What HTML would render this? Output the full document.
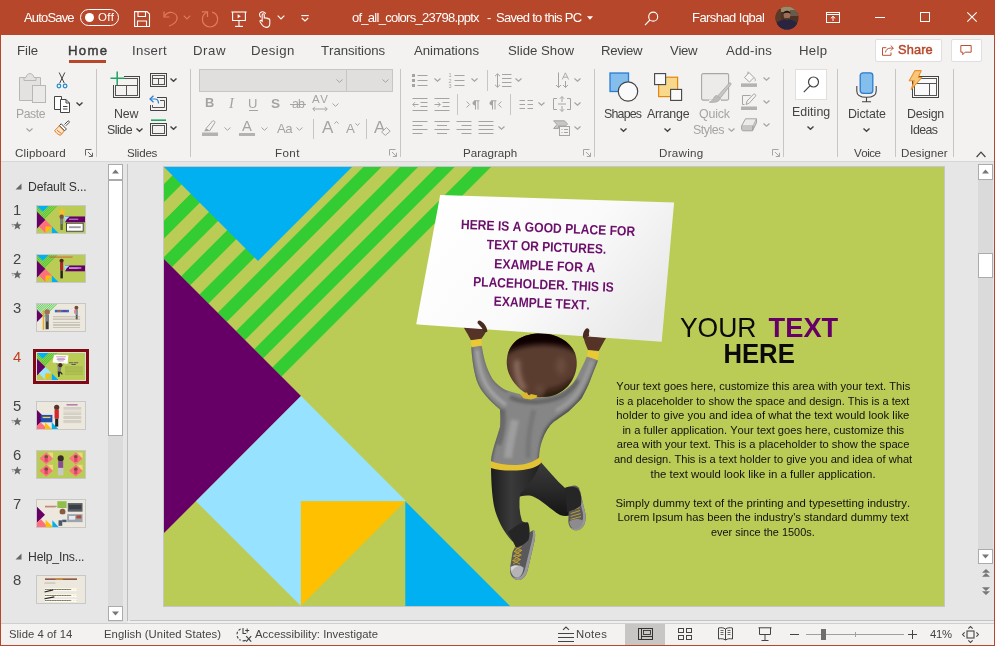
<!DOCTYPE html>
<html>
<head>
<meta charset="utf-8">
<title>PowerPoint</title>
<style>
*{box-sizing:border-box;margin:0;padding:0}
html,body{width:995px;height:646px;overflow:hidden;background:#e6e6e6}
body{font-family:"Liberation Sans",sans-serif;font-size:12px;color:#444;position:relative;font-kerning:none}
.abs{position:absolute}
#win{position:absolute;left:0;top:0;width:995px;height:646px;overflow:hidden;background:#e6e6e6}
#titlebar{position:absolute;left:0;top:0;width:995px;height:35px;background:#b7472a;color:#fff}
#tabs{position:absolute;left:0;top:35px;width:995px;height:30px;background:#f3f2f1}
#ribbon{position:absolute;left:0;top:65px;width:995px;height:97px;background:#f3f2f1;border-bottom:1px solid #d8d6d4}
#status{position:absolute;left:0;top:623px;width:995px;height:23px;background:#f3f2f1;border-top:1px solid #cfcfcf}
.t{position:absolute;white-space:nowrap;line-height:1;will-change:transform}
.gsep{position:absolute;top:4px;width:1px;height:88px;background:#c8c6c4}
.vs{position:absolute;width:1px;background:#c8c6c4}
#borderL{position:absolute;left:0;top:35px;width:1px;height:611px;background:#b7472a}
#borderR{position:absolute;left:994px;top:35px;width:1px;height:611px;background:#b7472a}
#borderB{position:absolute;left:0;top:645px;width:995px;height:1px;background:#b7472a}
svg{position:absolute;overflow:visible}
</style>
</head>
<body>
<div id="win">
<div id="content" class="abs" style="left:1px;top:162px;width:993px;height:460px;background:#e6e6e6"></div>
<div id="thumbs">
<svg style="left:15px;top:183px" width="7" height="7" viewBox="0 0 7 7"><path d="M6.5,0.5 V6.5 H0.5 Z" fill="#666"/></svg>
<span class="t" style="left:28.02px;top:180.7px;font-size:12.2px;line-height:12.2px;color:#333;letter-spacing:-0.160px;">Default S...</span>
<svg style="left:15px;top:553px" width="7" height="7" viewBox="0 0 7 7"><path d="M6.5,0.5 V6.5 H0.5 Z" fill="#666"/></svg>
<span class="t" style="left:28.02px;top:550.7px;font-size:12.2px;line-height:12.2px;color:#333;letter-spacing:-0.175px;">Help_Ins...</span>
<span class="t" style="left:11.5px;top:202.5px;font-size:14.8px;line-height:14.8px;color:#444;width:10px;text-align:center">1</span>
<svg style="left:11px;top:221px" width="11" height="9" viewBox="0 0 13 11"><path d="M7.5,0.3 L9,3.9 L12.8,4.1 L9.8,6.5 L10.8,10.3 L7.5,8.2 L4.2,10.3 L5.2,6.5 L2.2,4.1 L6,3.9 Z" fill="#666"/><path d="M0.5,4.2 H2.4 M1.2,6.2 H3" stroke="#777" stroke-width="0.9" fill="none"/></svg>
<div class="abs" style="left:36px;top:205px;width:50px;height:29px;background:#c8c8c8"></div>
<svg style="left:37px;top:206px;overflow:hidden" width="48" height="27" viewBox="0 0 780 439" preserveAspectRatio="none"><rect width="780" height="439" fill="#bacc56"/><g fill="#33cc33"><polygon points="-38,54 27,-10 45,-10 -28,64"/><polygon points="-19,73 63,-10 82,-10 -10,82"/><polygon points="-1,91 100,-10 118,-10 8,100"/><polygon points="17,109 136,-10 154,-10 26,118"/><polygon points="35,127 173,-10 191,-10 44,136"/><polygon points="54,146 209,-10 228,-10 63,155"/><polygon points="72,164 246,-10 264,-10 81,173"/><polygon points="90,182 282,-10 300,-10 99,191"/><polygon points="108,200 319,-10 337,-10 118,210"/></g><polygon points="0,0 188,0 94,94" fill="#00b0f0"/><polygon points="0,92 137,229 0,366" fill="#660066"/><polygon points="137,229 242,334 137,439 32,334" fill="#ff6f7d"/><polygon points="137,334 242,334 137,439" fill="#ffc000"/><polygon points="242,334 242,439 346,439" fill="#00b0f0"/><rect x="455" y="170" width="325" height="95" fill="#660066"/><polygon points="430,170 530,170 480,220 455,265 455,210" fill="#99e5ff"/><rect x="520" y="205" width="150" height="22" fill="#b070c0"/><polygon points="405,20 425,72 480,75 437,108 452,162 405,130 358,162 373,108 330,75 385,72" fill="#f2c12e"/><rect x="375" y="190" width="50" height="100" fill="#7a8088"/><rect x="380" y="290" width="40" height="100" fill="#5a6a3a"/><circle cx="400" cy="175" r="36" fill="#7a5040"/><rect x="480" y="280" width="270" height="130" fill="#fff" stroke="#333" stroke-width="14"/><rect x="520" y="330" width="190" height="30" fill="#999"/></svg>
<span class="t" style="left:11.5px;top:251.5px;font-size:14.8px;line-height:14.8px;color:#444;width:10px;text-align:center">2</span>
<svg style="left:11px;top:270px" width="11" height="9" viewBox="0 0 13 11"><path d="M7.5,0.3 L9,3.9 L12.8,4.1 L9.8,6.5 L10.8,10.3 L7.5,8.2 L4.2,10.3 L5.2,6.5 L2.2,4.1 L6,3.9 Z" fill="#666"/><path d="M0.5,4.2 H2.4 M1.2,6.2 H3" stroke="#777" stroke-width="0.9" fill="none"/></svg>
<div class="abs" style="left:36px;top:254px;width:50px;height:29px;background:#c8c8c8"></div>
<svg style="left:37px;top:255px;overflow:hidden" width="48" height="27" viewBox="0 0 780 439" preserveAspectRatio="none"><rect width="780" height="439" fill="#bacc56"/><g fill="#33cc33"><polygon points="-38,54 27,-10 45,-10 -28,64"/><polygon points="-19,73 63,-10 82,-10 -10,82"/><polygon points="-1,91 100,-10 118,-10 8,100"/><polygon points="17,109 136,-10 154,-10 26,118"/><polygon points="35,127 173,-10 191,-10 44,136"/><polygon points="54,146 209,-10 228,-10 63,155"/><polygon points="72,164 246,-10 264,-10 81,173"/><polygon points="90,182 282,-10 300,-10 99,191"/><polygon points="108,200 319,-10 337,-10 118,210"/></g><polygon points="0,0 188,0 94,94" fill="#00b0f0"/><polygon points="0,92 137,229 0,366" fill="#660066"/><polygon points="137,229 242,334 137,439 32,334" fill="#ff6f7d"/><polygon points="137,334 242,334 137,439" fill="#ffc000"/><polygon points="242,334 242,439 346,439" fill="#00b0f0"/><rect x="455" y="170" width="325" height="95" fill="#660066"/><polygon points="430,170 530,170 480,220 455,265 455,210" fill="#99e5ff"/><rect x="520" y="205" width="150" height="22" fill="#b070c0"/><rect x="375" y="120" width="50" height="130" fill="#b5232f"/><rect x="380" y="250" width="40" height="130" fill="#222"/><circle cx="400" cy="95" r="34" fill="#4a2b20"/><rect x="200" y="25" width="380" height="18" fill="#d9462f" opacity="0.7"/><rect x="520" y="200" width="200" height="22" fill="#c9a0d9"/></svg>
<span class="t" style="left:11.5px;top:300.5px;font-size:14.8px;line-height:14.8px;color:#444;width:10px;text-align:center">3</span>
<div class="abs" style="left:36px;top:303px;width:50px;height:29px;background:#c8c8c8"></div>
<svg style="left:37px;top:304px;overflow:hidden" width="48" height="27" viewBox="0 0 780 439" preserveAspectRatio="none"><rect width="780" height="439" fill="#ede8dd"/><g fill="#33cc33" opacity="0.85"><polygon points="-38,54 27,-10 45,-10 -28,64"/><polygon points="-19,73 63,-10 82,-10 -10,82"/><polygon points="-1,91 100,-10 118,-10 8,100"/><polygon points="17,109 136,-10 154,-10 26,118"/><polygon points="35,127 173,-10 191,-10 44,136"/><polygon points="54,146 209,-10 228,-10 63,155"/><polygon points="72,164 246,-10 264,-10 81,173"/><polygon points="90,182 282,-10 300,-10 99,191"/><polygon points="108,200 319,-10 337,-10 118,210"/></g><polygon points="0,92 100,192 0,292" fill="#660066"/><rect x="135" y="170" width="60" height="110" fill="#7a8088"/><rect x="140" y="280" width="50" height="130" fill="#3a3a3a"/><circle cx="165" cy="130" r="45" fill="#a07058"/><rect x="92" y="110" width="26" height="310" fill="#e0b030"/><rect x="290" y="95" width="230" height="40" fill="#2a6fc9"/><rect x="330" y="105" width="60" height="22" fill="#e0592a"/><rect x="420" y="105" width="60" height="22" fill="#8a2a8a"/><rect x="625" y="90" width="40" height="90" fill="#8a8f96"/><rect x="605" y="95" width="22" height="60" fill="#e06aa0"/><rect x="630" y="180" width="30" height="70" fill="#444"/><circle cx="640" cy="60" r="32" fill="#7a4a35"/><rect x="260" y="200" width="440" height="7" fill="#9a958a"/><rect x="260" y="225" width="440" height="7" fill="#9a958a"/><rect x="260" y="250" width="440" height="7" fill="#9a958a"/><rect x="260" y="300" width="440" height="7" fill="#9a958a"/><rect x="260" y="325" width="440" height="7" fill="#9a958a"/><rect x="260" y="350" width="440" height="7" fill="#9a958a"/><rect x="260" y="375" width="440" height="7" fill="#9a958a"/></svg>
<span class="t" style="left:11.5px;top:349.5px;font-size:14.8px;line-height:14.8px;color:#c43e1c;width:10px;text-align:center">4</span>
<div class="abs" style="left:33px;top:349px;width:56px;height:35px;background:#7d0a14"></div>
<div class="abs" style="left:36px;top:352px;width:50px;height:29px;background:#dcdcdc"></div>
<svg style="left:37px;top:353px;overflow:hidden" width="48" height="27" viewBox="0 0 780 439" preserveAspectRatio="none"><rect width="780" height="439" fill="#bacc56"/><g fill="#33cc33"><polygon points="-38,54 27,-10 45,-10 -28,64"/><polygon points="-19,73 63,-10 82,-10 -10,82"/><polygon points="-1,91 100,-10 118,-10 8,100"/><polygon points="17,109 136,-10 154,-10 26,118"/><polygon points="35,127 173,-10 191,-10 44,136"/><polygon points="54,146 209,-10 228,-10 63,155"/><polygon points="72,164 246,-10 264,-10 81,173"/><polygon points="90,182 282,-10 300,-10 99,191"/><polygon points="108,200 319,-10 337,-10 118,210"/></g><polygon points="0,0 188,0 94,94" fill="#00b0f0"/><polygon points="0,92 137,229 0,366" fill="#660066"/><polygon points="137,229 242,334 137,334 137,439 32,334" fill="#99e5ff"/><polygon points="137,334 242,334 137,439" fill="#ffc000"/><polygon points="242,334 242,439 346,439" fill="#00b0f0"/><polygon points="276,28 510,35 498,174 252,156" fill="#fff"/><g fill="#a46aa4"><rect x="310" y="58" width="160" height="10"/><rect x="330" y="80" width="120" height="10"/><rect x="320" y="102" width="140" height="10"/><rect x="335" y="124" width="100" height="10"/></g><path d="M315,165 L335,230 L335,300 L385,300 L395,235 L435,175 L425,170 L385,225 L345,225 L325,162 Z" fill="#808080"/><circle cx="377" cy="198" r="34" fill="#4a2b20"/><path d="M335,300 L385,300 L420,340 L405,355 L375,325 L365,390 L345,390 Z" fill="#2a2a2a"/><rect x="520" y="152" width="70" height="14" fill="#555"/><rect x="600" y="152" width="70" height="14" fill="#7a3a7a"/><rect x="560" y="178" width="70" height="14" fill="#444"/><rect x="455" y="218" width="290" height="5" fill="#8a9a48"/><rect x="455" y="233" width="290" height="5" fill="#8a9a48"/><rect x="455" y="248" width="290" height="5" fill="#8a9a48"/><rect x="455" y="263" width="290" height="5" fill="#8a9a48"/><rect x="455" y="278" width="290" height="5" fill="#8a9a48"/><rect x="455" y="293" width="290" height="5" fill="#8a9a48"/><rect x="455" y="308" width="290" height="5" fill="#8a9a48"/><rect x="455" y="338" width="290" height="5" fill="#8a9a48"/><rect x="455" y="353" width="290" height="5" fill="#8a9a48"/></svg>
<span class="t" style="left:11.5px;top:398.5px;font-size:14.8px;line-height:14.8px;color:#444;width:10px;text-align:center">5</span>
<svg style="left:11px;top:417px" width="11" height="9" viewBox="0 0 13 11"><path d="M7.5,0.3 L9,3.9 L12.8,4.1 L9.8,6.5 L10.8,10.3 L7.5,8.2 L4.2,10.3 L5.2,6.5 L2.2,4.1 L6,3.9 Z" fill="#666"/><path d="M0.5,4.2 H2.4 M1.2,6.2 H3" stroke="#777" stroke-width="0.9" fill="none"/></svg>
<div class="abs" style="left:36px;top:401px;width:50px;height:29px;background:#c8c8c8"></div>
<svg style="left:37px;top:402px;overflow:hidden" width="48" height="27" viewBox="0 0 780 439" preserveAspectRatio="none"><rect width="780" height="439" fill="#ede8dd"/><polygon points="0,130 130,260 0,390" fill="#660066"/><polygon points="60,330 170,439 0,439 0,390" fill="#ff6f7d"/><polygon points="130,330 240,439 130,439" fill="#ffc000"/><polygon points="240,330 240,439 345,439" fill="#00b0f0"/><rect x="60" y="210" width="190" height="120" fill="#1f4fae"/><rect x="90" y="240" width="130" height="22" fill="#e8d24a"/><rect x="285" y="120" width="70" height="150" fill="#d7262f"/><rect x="295" y="270" width="50" height="130" fill="#222"/><circle cx="320" cy="85" r="42" fill="#5a3525"/><rect x="480" y="40" width="180" height="14" fill="#8a2a8a"/><rect x="430" y="90" width="290" height="6" fill="#aaa59a"/><rect x="430" y="108" width="290" height="6" fill="#aaa59a"/><rect x="430" y="126" width="290" height="6" fill="#aaa59a"/><rect x="430" y="160" width="290" height="6" fill="#aaa59a"/><rect x="430" y="178" width="290" height="6" fill="#aaa59a"/><rect x="430" y="196" width="290" height="6" fill="#aaa59a"/><rect x="430" y="230" width="290" height="6" fill="#aaa59a"/><rect x="430" y="248" width="290" height="6" fill="#aaa59a"/><rect x="430" y="266" width="290" height="6" fill="#aaa59a"/><rect x="430" y="300" width="290" height="6" fill="#aaa59a"/><rect x="430" y="318" width="290" height="6" fill="#aaa59a"/><rect x="430" y="336" width="290" height="6" fill="#aaa59a"/></svg>
<span class="t" style="left:11.5px;top:447.5px;font-size:14.8px;line-height:14.8px;color:#444;width:10px;text-align:center">6</span>
<svg style="left:11px;top:466px" width="11" height="9" viewBox="0 0 13 11"><path d="M7.5,0.3 L9,3.9 L12.8,4.1 L9.8,6.5 L10.8,10.3 L7.5,8.2 L4.2,10.3 L5.2,6.5 L2.2,4.1 L6,3.9 Z" fill="#666"/><path d="M0.5,4.2 H2.4 M1.2,6.2 H3" stroke="#777" stroke-width="0.9" fill="none"/></svg>
<div class="abs" style="left:36px;top:450px;width:50px;height:29px;background:#c8c8c8"></div>
<svg style="left:37px;top:451px;overflow:hidden" width="48" height="27" viewBox="0 0 780 439" preserveAspectRatio="none"><rect width="780" height="439" fill="#bacc56"/><polygon points="150,25 260,120 150,215 40,120" fill="#ff6f7d"/><circle cx="150" cy="95" r="30" fill="#7a4a35"/><rect x="125" y="120" width="50" height="55" fill="#d9466a"/><polygon points="170,25 260,120 260,25" fill="#ffe08a" opacity="0.7"/><polygon points="150,225 260,320 150,415 40,320" fill="#ff6f7d"/><circle cx="150" cy="295" r="30" fill="#7a4a35"/><rect x="125" y="320" width="50" height="55" fill="#d9466a"/><polygon points="170,225 260,320 260,225" fill="#ffe08a" opacity="0.7"/><polygon points="630,25 740,120 630,215 520,120" fill="#ff6f7d"/><circle cx="630" cy="95" r="30" fill="#7a4a35"/><rect x="605" y="120" width="50" height="55" fill="#d9466a"/><polygon points="650,25 740,120 740,25" fill="#ffe08a" opacity="0.7"/><polygon points="630,225 740,320 630,415 520,320" fill="#ff6f7d"/><circle cx="630" cy="295" r="30" fill="#7a4a35"/><rect x="605" y="320" width="50" height="55" fill="#d9466a"/><polygon points="650,225 740,320 740,225" fill="#ffe08a" opacity="0.7"/><circle cx="385" cy="120" r="50" fill="#3a2a25"/><rect x="345" y="165" width="80" height="110" fill="#8a4a9a"/><rect x="340" y="275" width="90" height="120" fill="#c8c8c8"/></svg>
<span class="t" style="left:11.5px;top:496.5px;font-size:14.8px;line-height:14.8px;color:#444;width:10px;text-align:center">7</span>
<div class="abs" style="left:36px;top:499px;width:50px;height:29px;background:#c8c8c8"></div>
<svg style="left:37px;top:500px;overflow:hidden" width="48" height="27" viewBox="0 0 780 439" preserveAspectRatio="none"><rect width="780" height="439" fill="#ede8dd"/><polygon points="0,110 130,240 0,370" fill="#660066"/><polygon points="60,310 180,439 0,439 0,370" fill="#ff6f7d"/><polygon points="140,320 260,439 140,439" fill="#ffc000"/><polygon points="250,330 250,439 350,439" fill="#00b0f0"/><rect x="330" y="20" width="150" height="110" fill="#8fbf4a"/><rect x="500" y="50" width="240" height="140" fill="#5a5f66"/><rect x="520" y="80" width="200" height="70" fill="#3a3f46"/><rect x="490" y="230" width="250" height="130" fill="#9aa5b0"/><rect x="520" y="260" width="100" height="60" fill="#e8e8ec"/><rect x="640" y="250" width="80" height="50" fill="#b04a3a"/><rect x="130" y="95" width="190" height="12" fill="#b8392a"/><rect x="130" y="120" width="170" height="7" fill="#9a958a"/><circle cx="415" cy="190" r="48" fill="#8a5a40"/><rect x="370" y="235" width="80" height="100" fill="#e8e8e8"/><rect x="350" y="330" width="60" height="90" fill="#4a5a6a"/><rect x="410" y="320" width="70" height="40" fill="#4a5a6a"/></svg>
<span class="t" style="left:11.5px;top:572.5px;font-size:14.8px;line-height:14.8px;color:#444;width:10px;text-align:center">8</span>
<div class="abs" style="left:36px;top:575px;width:50px;height:29px;background:#c8c8c8"></div>
<svg style="left:37px;top:576px;overflow:hidden" width="48" height="27" viewBox="0 0 780 439" preserveAspectRatio="none"><rect width="780" height="439" fill="#ede8dd"/><rect x="130" y="40" width="520" height="22" fill="#7a3a2a"/><rect x="300" y="42" width="120" height="18" fill="#e0a02a"/><rect x="120" y="110" width="180" height="8" fill="#8a857a"/><rect x="130" y="200" width="520" height="40" fill="#fff"/><rect x="130" y="212" width="420" height="10" fill="#222"/><rect x="130" y="300" width="520" height="40" fill="#fff"/><rect x="130" y="312" width="420" height="10" fill="#222"/><rect x="130" y="380" width="520" height="40" fill="#fff"/><rect x="130" y="392" width="420" height="10" fill="#222"/><polygon points="120,250 260,215 265,235 125,270" fill="#222"/><polygon points="120,360 280,330 284,348 124,378" fill="#222"/><rect x="150" y="210" width="16" height="10" fill="#e0c040"/><rect x="190" y="210" width="16" height="10" fill="#e0c040"/><rect x="230" y="210" width="16" height="10" fill="#e0c040"/><rect x="270" y="210" width="16" height="10" fill="#e0c040"/><rect x="310" y="210" width="16" height="10" fill="#e0c040"/><rect x="350" y="210" width="16" height="10" fill="#e0c040"/><rect x="390" y="210" width="16" height="10" fill="#e0c040"/><rect x="430" y="210" width="16" height="10" fill="#e0c040"/><rect x="470" y="210" width="16" height="10" fill="#e0c040"/><rect x="510" y="210" width="16" height="10" fill="#e0c040"/><rect x="550" y="210" width="16" height="10" fill="#e0c040"/><rect x="590" y="210" width="16" height="10" fill="#e0c040"/><rect x="630" y="210" width="16" height="10" fill="#e0c040"/><rect x="150" y="310" width="16" height="10" fill="#e0c040"/><rect x="190" y="310" width="16" height="10" fill="#e0c040"/><rect x="230" y="310" width="16" height="10" fill="#e0c040"/><rect x="270" y="310" width="16" height="10" fill="#e0c040"/><rect x="310" y="310" width="16" height="10" fill="#e0c040"/><rect x="350" y="310" width="16" height="10" fill="#e0c040"/><rect x="390" y="310" width="16" height="10" fill="#e0c040"/><rect x="430" y="310" width="16" height="10" fill="#e0c040"/><rect x="470" y="310" width="16" height="10" fill="#e0c040"/><rect x="510" y="310" width="16" height="10" fill="#e0c040"/><rect x="550" y="310" width="16" height="10" fill="#e0c040"/><rect x="590" y="310" width="16" height="10" fill="#e0c040"/><rect x="630" y="310" width="16" height="10" fill="#e0c040"/><rect x="150" y="390" width="16" height="10" fill="#e0c040"/><rect x="190" y="390" width="16" height="10" fill="#e0c040"/><rect x="230" y="390" width="16" height="10" fill="#e0c040"/><rect x="270" y="390" width="16" height="10" fill="#e0c040"/><rect x="310" y="390" width="16" height="10" fill="#e0c040"/><rect x="350" y="390" width="16" height="10" fill="#e0c040"/><rect x="390" y="390" width="16" height="10" fill="#e0c040"/><rect x="430" y="390" width="16" height="10" fill="#e0c040"/><rect x="470" y="390" width="16" height="10" fill="#e0c040"/><rect x="510" y="390" width="16" height="10" fill="#e0c040"/><rect x="550" y="390" width="16" height="10" fill="#e0c040"/><rect x="590" y="390" width="16" height="10" fill="#e0c040"/><rect x="630" y="390" width="16" height="10" fill="#e0c040"/></svg>
</div>
<div id="slideshadow" class="abs" style="left:163px;top:166px;width:782px;height:441px;background:#c6c6c6"></div>
<svg id="slidesvg" style="left:164px;top:167px;overflow:hidden;will-change:transform" width="780" height="439" viewBox="0 0 780 439">
<defs>
<linearGradient id="cardg" x1="0" y1="0.2" x2="1" y2="0.7"><stop offset="0" stop-color="#ffffff"/><stop offset="0.55" stop-color="#fafafa"/><stop offset="1" stop-color="#e8e8e8"/></linearGradient>
<radialGradient id="headg" cx="0.35" cy="0.62" r="0.65"><stop offset="0" stop-color="#7d5a4a"/><stop offset="0.45" stop-color="#5a3b2d"/><stop offset="0.8" stop-color="#3a2119"/><stop offset="1" stop-color="#1c0d0a"/></radialGradient>
<linearGradient id="bodyg" x1="0" y1="0" x2="1" y2="0"><stop offset="0" stop-color="#6e6e6e"/><stop offset="0.35" stop-color="#9a9a9a"/><stop offset="0.7" stop-color="#7c7c7c"/><stop offset="1" stop-color="#5a5a5a"/></linearGradient>
<linearGradient id="pantg" x1="0" y1="0" x2="1" y2="0"><stop offset="0" stop-color="#1c1c1c"/><stop offset="0.4" stop-color="#3a3a3a"/><stop offset="1" stop-color="#202020"/></linearGradient>
<linearGradient id="pantg2" x1="0" y1="0" x2="0" y2="1"><stop offset="0" stop-color="#3c3c3c"/><stop offset="0.5" stop-color="#2a2a2a"/><stop offset="1" stop-color="#151515"/></linearGradient>
<filter id="bl1" x="-20%" y="-20%" width="140%" height="140%"><feGaussianBlur stdDeviation="1.6"/></filter><filter id="bl2" x="-20%" y="-20%" width="140%" height="140%"><feGaussianBlur stdDeviation="2.5"/></filter><clipPath id="bodyclip"><path d="M471.3,346.5 C471.8,356 473,368 476.5,380 C480,391 489,400 500,409.5 C500.5,416 500.5,421 500,427 C498,434 494.5,444 492.5,452 C491.5,456 491,459 491,463 C500,468 520,469 530,467 L539,460 C539,452 540,446 542.5,439.5 C545,432 549,426 553.5,422 C559,418 564,415 568.5,411.5 C574,406 578.5,402 581.5,398.5 C585,392 588,386 590,381 C592.5,374 595.5,367 598,360.5 L587,356 C585.5,360 583.5,364 581.5,368 C580,371 578.5,374 577,377 C574,383 568,389 560,393 C552,397 540,398 531,397.5 C526,397 522,395.5 519.5,394 C514,392.5 509.5,391.5 505.5,390 C500,387 496,383.5 492.5,379 C489,373 486.5,367 485,361.5 C483.5,356 482.5,351 481.7,345.4 Z"/></clipPath><clipPath id="headclip"><path d="M541,333.5 C556,333.5 570,341 575,353 C579,364 576,377 568,386 C562,392.5 553,397 544,397 C537,397.5 531,397 527,394 C517,388 510,379 507.5,369 C505,357 509,346 517,340 C524,335 532,333.5 541,333.5 Z"/></clipPath>
</defs>
<rect x="0" y="0" width="780" height="439" fill="#bacc56"/>
<g fill="#33cc33"><polygon points="-37.5,54.5 26.9,-10.0 45.0,-10.0 -28.5,63.5"/><polygon points="-19.3,72.7 63.4,-10.0 81.5,-10.0 -10.2,81.8"/><polygon points="-1.0,91.0 99.9,-10.0 118.0,-10.0 8.0,100.0"/><polygon points="17.2,109.2 136.4,-10.0 154.5,-10.0 26.2,118.2"/><polygon points="35.5,127.5 172.9,-10.0 191.0,-10.0 44.5,136.5"/><polygon points="53.7,145.7 209.4,-10.0 227.5,-10.0 62.8,154.8"/><polygon points="72.0,163.9 245.9,-10.0 264.0,-10.0 81.0,173.0"/><polygon points="90.2,182.2 282.4,-10.0 300.5,-10.0 99.2,191.2"/><polygon points="108.4,200.4 318.9,-10.0 337.0,-10.0 117.5,209.5"/></g>
<polygon points="0,0 188,0 94,94" fill="#00b0f0"/>
<polygon points="0,92 137,229 0,366" fill="#660066"/>
<polygon points="137,229 242.2,334.2 137,334.2 137,439 32,334.2" fill="#97e3ff"/>
<polygon points="136.8,334.2 241.3,334.2 136.8,438.9" fill="#ffc000"/>
<polygon points="241.3,334.2 241.3,439 346,439" fill="#00b0f0"/>
<g id="person" transform="translate(-164,-167)">
<!-- right leg (behind) -->
<path d="M539,460 C548,470 556,480 565,488 C570,486 576,487 579,492 L582,506 C578,514 568,518 560,515 C550,509 542,500 532,496 C526,495 520,496 516,498 L500,470 Z" fill="url(#pantg2)"/>
<!-- right shoe -->
<path d="M571,486.5 C574,484.5 578,485.5 579.5,489 L585.5,514 C586.5,522 583.5,529 577.5,530.2 C572,531 568.5,527 568.3,521 L569,505 Z" fill="#59595b"/>
<path d="M579.5,489 L585.5,514 C586.5,522 583.5,529 577.5,530.2 C574,530.6 571.5,529.2 570,527 C573,529 577,528.5 579.5,526 C583,522.5 583.6,518 582.8,513 L577.5,489.5 Z" fill="#98989a"/>
<path d="M569.3,521.5 C572.5,518.5 579,518 583,520.5 C582.5,525 580.5,528 577,528.8 C572.5,529.5 569.5,526.5 569.3,521.5 Z" fill="#8c8c8e"/>
<path d="M571,510.5 L579.5,507.5 M570.8,513.5 L580,510.5 M570.6,516.5 L580.6,513.5 M570.6,519.3 L581,516.5" stroke="#c9a52c" stroke-width="0.9" fill="none"/>
<path d="M565,488 C569,485.5 575,486 578.5,489 C581,493 582,499 581,505 C577,509 572,511 567,512 Z" fill="#262626"/>
<!-- left leg -->
<path d="M491,466 C491,480 492,496 494,506 C497,520 504,532 512,541 L523,546 C527,542 530,536 529,530 C528,525 526,523 522,521 C519,512 519,503 520,494 C528,486 536,476 541,462 Z" fill="url(#pantg)"/>
<!-- left shoe -->
<path d="M517,543 C522,538 529,532 533.5,530 C535.5,531.5 535.5,536 534.5,541 L527.5,571 C525.5,577.5 521.5,580.5 517.5,580 C512.5,579 509.5,574.5 510,568.5 L512.5,552 Z" fill="#59595b"/>
<path d="M533.5,530 C535.5,531.5 535.5,536 534.5,541 L527.5,571 C525.5,577.5 521.5,580.5 517.5,580 C515,579.6 513,578.2 511.8,576.2 C514.5,578.4 518.5,578.4 521.2,576 C523.5,573.8 524.4,571 525.2,568 L532,540 C533,536 533.4,532.5 532.6,530.6 Z" fill="#98989a"/>
<path d="M510.3,567.5 C513.5,564.5 520,564.5 523.6,567.8 C523,572.5 521.5,576 518.5,577.5 C514,578.5 510.3,574 510.3,567.5 Z" fill="#b4b4b6"/>
<path d="M510.8,567 C513,565.2 516.5,565 519,566 C516,566.6 513,568.5 511.6,571.5 Z" fill="#d6d6d8"/>
<path d="M514.5,547 L522,550.5 L514,551.5 L521.3,555 L513.3,556 L520.6,559.5 L512.6,560.5 L520,564" stroke="#c9a52c" stroke-width="0.9" fill="none"/>
<path d="M521.5,546.5 L515,550.5 M521,551 L514.3,555 M520.4,555.5 L513.6,559.5 M519.8,560 L513,564" stroke="#c9a52c" stroke-width="0.9" fill="none"/>
<path d="M508,532 C513,528 522,521 528,522.5 C530,527 530,534 528.5,540 C525,544 520,546.5 516,547.5 Z" fill="#252525"/>
<!-- torso + arms -->
<path d="M471.3,346.5 C471.8,356 473,368 476.5,380 C480,391 489,400 500,409.5 C500.5,416 500.5,421 500,427 C498,434 494.5,444 492.5,452 C491.5,456 491,459 491,463 C500,468 520,469 530,467 L539,460 C539,452 540,446 542.5,439.5 C545,432 549,426 553.5,422 C559,418 564,415 568.5,411.5 C574,406 578.5,402 581.5,398.5 C585,392 588,386 590,381 C592.5,374 595.5,367 598,360.5 L587,356 C585.5,360 583.5,364 581.5,368 C580,371 578.5,374 577,377 C574,383 568,389 560,393 C552,397 540,398 531,397.5 C526,397 522,395.5 519.5,394 C514,392.5 509.5,391.5 505.5,390 C500,387 496,383.5 492.5,379 C489,373 486.5,367 485,361.5 C483.5,356 482.5,351 481.7,345.4 Z" fill="#868686"/>
<!-- body shading -->
<g clip-path="url(#bodyclip)"><g filter="url(#bl1)">
<path d="M470,346 C470.5,358 472,370 475.5,381 C479,392 488,401 499,410.5 C499.5,420 498,430 495,440 C492,450 490,456 490,464" stroke="#4a4a4a" stroke-width="4" fill="none" opacity="0.8"/>
<path d="M599.5,361 C596,370 593,378 590.5,383 C587,391 583,397 580,401 C575,407 568,412 562,416.5 C556,420 551,424 547,431 C543,439 541,450 540.5,461" stroke="#454545" stroke-width="5" fill="none" opacity="0.85"/>
<path d="M482.5,346 C484,358 487.5,370 493,379.5 C497,385 502,389 508,391.5" stroke="#5c5c5c" stroke-width="2.5" fill="none" opacity="0.7"/>
<path d="M477,350 C478,362 481,376 487,386 C492,394 499,400 506,405" stroke="#b4b4b4" stroke-width="3" fill="none" opacity="0.8"/>
<path d="M503,409 C505,420 503,432 499,445" stroke="#5a5a5a" stroke-width="4" fill="none" opacity="0.7"/>
<path d="M515,420 C512,434 509,446 508,458" stroke="#aaaaaa" stroke-width="8" fill="none" opacity="0.65"/>
<path d="M592,361 C588,372 584,382 578,392 C573,399 565,406 556,411" stroke="#a6a6a6" stroke-width="3.5" fill="none" opacity="0.7"/>
<path d="M510,397 C522,403 542,404 560,397 C568,393 574,387 578,380" stroke="#555" stroke-width="4.5" fill="none" opacity="0.7"/>
<path d="M534,410 C530,424 528,440 528,458" stroke="#6a6a6a" stroke-width="5" fill="none" opacity="0.5"/>
</g></g>
<!-- belt -->
<path d="M490.5,461 C500,465 515,466 525,464 C532,462 537,460 540.5,456 L541,463 C537,467 530,469 523,470 C512,471 500,471 491,468 Z" fill="#e3c233"/>
<!-- head -->
<path d="M541,333.5 C556,333.5 570,341 575,353 C579,364 576,377 568,386 C562,392.5 553,397 544,397 C537,397.5 531,397 527,394 C517,388 510,379 507.5,369 C505,357 509,346 517,340 C524,335 532,333.5 541,333.5 Z" fill="#5b3d30"/>
<g clip-path="url(#headclip)"><g filter="url(#bl2)">
<path d="M500,358 C508,340 525,330 545,330 C562,330 576,338 584,358 C574,348 560,344.5 543,344.5 C526,344.5 512,348 500,358 Z M495,325 H590 V340 H495 Z" fill="#0d0303"/>
<path d="M503,350 C504,375 514,392 530,400 L498,402 Z" fill="#1c0c09" opacity="0.85"/>
<path d="M581,350 C582,372 572,392 548,401 L592,400 Z" fill="#160907" opacity="0.9"/>
<path d="M545,390 C555,390 566,385 572,378 L572,402 L540,402 Z" fill="#1c0c09" opacity="0.7"/>
<path d="M517,360 C516,368 518,380 524,390" stroke="#9a7a6c" stroke-width="5.5" fill="none" opacity="0.85"/>
<ellipse cx="561" cy="366" rx="5" ry="9" fill="#7a5a4c" opacity="0.5"/>
<ellipse cx="540" cy="389" rx="4" ry="3" fill="#7a5a4c" opacity="0.5"/>
</g></g>
<!-- collar -->
<path d="M519.5,393.5 L527,392.5 L528.5,396 L531,394 L537.5,395.5 L536,398 L531,399.5 L524,398.5 Z" fill="#d9b92f"/>
<!-- palms -->
<path d="M463.5,327 L486.5,329 C486,333 483,336.5 480.8,339.5 L471,340.5 C469,336 466,331.5 463.5,327 Z" fill="#553327"/>
<path d="M470.6,340.3 L481.2,338.8 L482.2,345.4 L471.6,347.3 Z" fill="#e9c935"/>
<path d="M583,335 L606,338 C603.5,342.5 600.8,347 598.8,351 L588,350 C586,345.5 584,340.5 583,335 Z" fill="#553327"/>
<path d="M587.9,350.3 L599.3,351.8 L597.6,359.8 L586.6,356.4 Z" fill="#e9c935"/>
</g>
<g id="card">
<polygon points="276.2,27.9 510.1,35.4 497.7,174.7 252.2,157.3" fill="url(#cardg)"/>
</g>
<g id="hands" transform="translate(-164,-167)">
<path d="M484.8,331.5 C483.5,328.5 481,325.5 478.6,323.2 C477.8,322.2 478.6,321 480,321.4 C483.5,323.5 486,327 486.6,331.2 Z" fill="#4a2c21" stroke="#4a2c21" stroke-width="1.6" stroke-linejoin="round"/>
<path d="M584,337.5 C583.2,335 584.2,332 586,329.8 C587,328.6 588.8,329.2 588.6,330.8 C588.2,332.6 587.6,334 588.4,335.6 Z" fill="#4a2c21" stroke="#4a2c21" stroke-width="1.6" stroke-linejoin="round"/>
</g>
<g id="cardtext" transform="translate(-1.2,-0.2) rotate(2.35 382 98)" font-family="Liberation Sans, sans-serif" font-weight="bold" font-size="13.6" fill="#6b0f6b" text-anchor="middle">
<text x="383.7" y="65.6" textLength="174.5" lengthAdjust="spacingAndGlyphs">HERE IS A GOOD PLACE FOR</text>
<text x="383" y="84.5" textLength="119.6" lengthAdjust="spacingAndGlyphs">TEXT OR PICTURES.</text>
<text x="382" y="103.5" textLength="101" lengthAdjust="spacingAndGlyphs">EXAMPLE FOR A</text>
<text x="381.5" y="122.3" textLength="140.7" lengthAdjust="spacingAndGlyphs">PLACEHOLDER. THIS IS</text>
<text x="380.5" y="141" textLength="96" lengthAdjust="spacingAndGlyphs">EXAMPLE TEXT.</text>
</g>
<g id="title" font-family="Liberation Sans, sans-serif" font-size="27.2">
<text x="515.9" y="169.7" textLength="76.6" lengthAdjust="spacingAndGlyphs" fill="#0a0a0a">YOUR</text>
<text x="604.6" y="169.7" textLength="69.6" lengthAdjust="spacingAndGlyphs" fill="#660066" font-weight="bold">TEXT</text>
<text x="559.4" y="195.9" textLength="71.4" lengthAdjust="spacingAndGlyphs" fill="#0a0a0a" font-weight="bold">HERE</text>
</g>
<g id="bodytext" font-family="Liberation Sans, sans-serif" font-size="11" fill="#111">
<text x="452.3" y="223" textLength="293.9" lengthAdjust="spacingAndGlyphs">Your text goes here, customize this area with your text. This</text>
<text x="452.3" y="237.6" textLength="293.1" lengthAdjust="spacingAndGlyphs">is a placeholder to show the space and design. This is a text</text>
<text x="452.3" y="252.2" textLength="293.1" lengthAdjust="spacingAndGlyphs">holder to give you and idea of what the text would look like</text>
<text x="458.4" y="266.8" textLength="281.8" lengthAdjust="spacingAndGlyphs">in a fuller application. Your text goes here, customize this</text>
<text x="452.7" y="281.4" textLength="292.7" lengthAdjust="spacingAndGlyphs">area with your text. This is a placeholder to show the space</text>
<text x="449.9" y="296" textLength="298.3" lengthAdjust="spacingAndGlyphs">and design. This is a text holder to give you and idea of what</text>
<text x="486.5" y="310.6" textLength="225.1" lengthAdjust="spacingAndGlyphs">the text would look like in a fuller application.</text>
<text x="451.5" y="339.8" textLength="294.7" lengthAdjust="spacingAndGlyphs">Simply dummy text of the printing and typesetting industry.</text>
<text x="453.5" y="354.4" textLength="291.1" lengthAdjust="spacingAndGlyphs">Lorem Ipsum has been the industry's standard dummy text</text>
<text x="546.9" y="369" textLength="103.9" lengthAdjust="spacingAndGlyphs">ever since the 1500s.</text>
</g>
</svg>
<!-- thumbnail scrollbar -->
<div class="abs" style="left:108px;top:164px;width:15px;height:458px;background:#dbdbdb"></div>
<div class="abs" style="left:108px;top:164px;width:15px;height:16px;background:#fff;border:1px solid #ababab"></div>
<svg style="left:112px;top:169px" width="7" height="5" viewBox="0 0 7 5"><path d="M0,4.5 L3.5,0.5 L7,4.5 Z" fill="#777"/></svg>
<div class="abs" style="left:108px;top:180px;width:15px;height:256px;background:#fff;border:1px solid #ababab"></div>
<div class="abs" style="left:108px;top:606px;width:15px;height:15px;background:#fff;border:1px solid #ababab"></div>
<svg style="left:112px;top:611px" width="7" height="5" viewBox="0 0 7 5"><path d="M0,0.5 L3.5,4.5 L7,0.5 Z" fill="#777"/></svg>
<!-- splitter -->
<div class="abs" style="left:127px;top:164px;width:1px;height:457px;background:#bcbcbc"></div>
<!-- main scrollbar -->
<div class="abs" style="left:978px;top:164px;width:15px;height:400px;background:#dadada"></div>
<div class="abs" style="left:978px;top:164px;width:15px;height:16px;background:#fff;border:1px solid #ababab"></div>
<svg style="left:982px;top:169px" width="7" height="5" viewBox="0 0 7 5"><path d="M0,4.5 L3.5,0.5 L7,4.5 Z" fill="#777"/></svg>
<div class="abs" style="left:978px;top:253px;width:15px;height:25px;background:#fff;border:1px solid #ababab"></div>
<div class="abs" style="left:978px;top:549px;width:15px;height:15px;background:#fff;border:1px solid #ababab"></div>
<svg style="left:982px;top:554px" width="7" height="5" viewBox="0 0 7 5"><path d="M0,0.5 L3.5,4.5 L7,0.5 Z" fill="#777"/></svg>
<svg style="left:982px;top:569px" width="8" height="8" viewBox="0 0 8 8"><path d="M0,3.7 L4,0 L8,3.7 Z M0,7.7 L4,4 L8,7.7 Z" fill="#777"/></svg>
<svg style="left:982px;top:587px" width="8" height="8" viewBox="0 0 8 8"><path d="M0,0.3 L4,4 L8,0.3 Z M0,4.3 L4,8 L8,4.3 Z" fill="#777"/></svg>

<div class="abs" style="left:130px;top:620px;width:864px;height:1px;background:#c4c4c4"></div>
<div class="abs" style="left:128px;top:621px;width:866px;height:2px;background:#efefef"></div>
<div id="titlebar">
<span class="t" style="left:24.00px;top:11.2px;font-size:13px;line-height:13px;color:#fff;letter-spacing:-0.834px;">AutoSave</span>
<div class="abs" style="left:80px;top:9px;width:39px;height:17px;border:1px solid #fff;border-radius:9px"></div>
<div class="abs" style="left:85px;top:13px;width:9px;height:9px;border-radius:5px;background:#fff"></div>
<span class="t" style="left:98.48px;top:11.8px;font-size:11.5px;line-height:11.5px;color:#fff;letter-spacing:0.310px;">Off</span>
<!-- save -->
<svg style="left:134px;top:10.5px" width="17" height="17" viewBox="0 0 17 17" fill="none" stroke="#fff" stroke-width="1.1"><path d="M1.5,0.6 H13 L15.5,3 V15.5 H0.6 V0.6 Z"/><path d="M4,0.6 V5.5 H11.5 V0.6"/><path d="M3.5,15.5 V10 H12.5 V15.5"/></svg>
<!-- undo -->
<svg style="left:163px;top:10px" width="16" height="17" viewBox="0 0 16 17" fill="none" stroke="#e07a60" stroke-width="1.2"><path d="M1,1.5 V7 H6.5"/><path d="M1.3,6.7 C3,3.5 6,2 9,2.5 C12.5,3.2 14.5,6 14,9 C13.5,12 10,14.5 6,16"/></svg>
<svg style="left:183px;top:15px" width="8" height="5" viewBox="0 0 8 5" fill="none" stroke="#e07a60" stroke-width="1.1"><path d="M0.7,0.7 L4,4 L7.3,0.7"/></svg>
<!-- redo -->
<svg style="left:201px;top:10px" width="18" height="18" viewBox="0 0 18 18" fill="none" stroke="#e07a60" stroke-width="1.2"><path d="M1,1.8 H6.5 V7"/><path d="M6.3,2.3 C3.3,3.5 1.4,6.3 1.4,9.5 C1.4,13.6 4.8,17 9,17 C13.2,17 16.6,13.6 16.6,9.5 C16.6,6 14.2,3 11,2.2"/></svg>
<!-- present -->
<svg style="left:231px;top:10.5px" width="16" height="17" viewBox="0 0 16 17" fill="none" stroke="#fff" stroke-width="1.1"><path d="M0.4,1 H15.6"/><path d="M1.6,1 V9.5 H14.4 V1"/><path d="M8,9.5 V15"/><path d="M4,15.4 H12"/><path d="M6.6,3.2 L9.8,5.2 L6.6,7.2 Z" fill="#fff" stroke="none"/></svg>
<!-- touch -->
<svg style="left:257.5px;top:10.5px" width="13" height="17" viewBox="0 0 15 19" preserveAspectRatio="none" fill="none" stroke="#fff" stroke-width="1.25"><path d="M3.2,7 C1.5,5.5 1.2,3 3,1.6 C5,0.2 8,1 8.8,3.2"/><path d="M4.8,11.5 V4.2 C4.8,2.6 7.2,2.6 7.2,4.2 V8.5 C7.2,7.2 9.4,7.2 9.4,8.6 C9.6,7.6 11.6,7.8 11.6,9.2 C11.9,8.4 13.6,8.6 13.6,10 V14 C13.6,16.5 12,18.3 9.5,18.3 C7,18.3 5.8,17.2 4.6,15.4 L2.4,12 C1.8,10.8 3.4,10 4.2,11 Z"/></svg>
<svg style="left:277px;top:15px" width="8" height="5" viewBox="0 0 8 5" fill="none" stroke="#fff" stroke-width="1.1"><path d="M0.7,0.7 L4,4 L7.3,0.7"/></svg>
<!-- customize -->
<svg style="left:300.5px;top:14.5px" width="8" height="7" viewBox="0 0 8 7" fill="none" stroke="#fff" stroke-width="1.1"><path d="M0.3,0.6 H7.7"/><path d="M0.8,3 L4,6 L7.2,3"/></svg>
<span class="t" style="left:352.48px;top:11.2px;font-size:13px;line-height:13px;color:#fff;letter-spacing:-0.736px;">of_all_colors_23798.pptx</span><span class="t" style="left:486.98px;top:11.2px;font-size:13px;line-height:13px;color:#fff;letter-spacing:0.000px;">-</span><span class="t" style="left:496.42px;top:11.2px;font-size:13px;line-height:13px;color:#fff;letter-spacing:-0.716px;">Saved to this PC</span>
<svg style="left:587px;top:16px" width="6" height="4" viewBox="0 0 6 4"><path d="M0,0.3 L6,0.3 L3,3.8 Z" fill="#fff"/></svg>
<!-- search -->
<svg style="left:644px;top:10.5px" width="15" height="15" viewBox="0 0 16 16" fill="none" stroke="#fff" stroke-width="1.2"><circle cx="9.8" cy="6" r="4.8"/><path d="M6.3,9.6 L1,15"/></svg>
<span class="t" style="left:691.96px;top:11.2px;font-size:13px;line-height:13px;color:#fff;letter-spacing:-0.557px;">Farshad Iqbal</span>
<!-- avatar -->
<svg style="left:775px;top:6px" width="24" height="24" viewBox="0 0 24 24"><defs><clipPath id="avc"><circle cx="12" cy="12" r="11.5"/></clipPath></defs><g clip-path="url(#avc)"><rect width="24" height="24" fill="#4a3224"/><rect x="5" y="0" width="19" height="6" fill="#9a8a6a"/><rect x="15" y="4" width="9" height="6" fill="#6a5a4a"/><rect x="0" y="3" width="6" height="12" fill="#5a3a26"/><path d="M0,24 C0,16 5,13.5 12,13.5 C19,13.5 24,16 24,24 Z" fill="#2a2440"/><ellipse cx="12" cy="9" rx="3.4" ry="4.2" fill="#9c6e56"/><path d="M8.4,8 C8.2,3.6 15.8,3.6 15.6,8 C14.5,6.2 9.5,6.2 8.4,8 Z" fill="#1a1210"/><path d="M9.5,11.5 C10.5,13.8 13.5,13.8 14.5,11.5 C13.5,12.6 10.5,12.6 9.5,11.5 Z" fill="#3a2418"/></g></svg>
<!-- ribbon display -->
<svg style="left:826px;top:12px" width="14" height="11" viewBox="0 0 14 11" fill="none" stroke="#fff" stroke-width="1"><rect x="0.5" y="0.5" width="13" height="10"/><path d="M0.5,2.5 H13.5"/><path d="M7,9 V4.5"/><path d="M4.8,6.4 L7,4.3 L9.2,6.4"/></svg>
<div class="abs" style="left:875px;top:17px;width:10px;height:1px;background:#fff"></div>
<div class="abs" style="left:920px;top:12px;width:10px;height:10px;border:1px solid #fff"></div>
<svg style="left:966.5px;top:12px" width="10" height="10" viewBox="0 0 10 10" stroke="#fff" stroke-width="1.1"><path d="M0.3,0.3 L9.7,9.7 M9.7,0.3 L0.3,9.7"/></svg>
</div>
<div id="tabs">
<span class="t" style="left:16.94px;top:8.8px;font-size:13.2px;line-height:13.2px;color:#444;letter-spacing:-0.049px;">File</span>
<span class="t" style="left:131.81px;top:8.8px;font-size:13.2px;line-height:13.2px;color:#444;letter-spacing:0.343px;">Insert</span>
<span class="t" style="left:192.94px;top:8.8px;font-size:13.2px;line-height:13.2px;color:#444;letter-spacing:0.585px;">Draw</span>
<span class="t" style="left:250.94px;top:8.8px;font-size:13.2px;line-height:13.2px;color:#444;letter-spacing:0.465px;">Design</span>
<span class="t" style="left:320.74px;top:8.8px;font-size:13.2px;line-height:13.2px;color:#444;letter-spacing:-0.029px;">Transitions</span>
<span class="t" style="left:414.00px;top:8.8px;font-size:13.2px;line-height:13.2px;color:#444;letter-spacing:-0.029px;">Animations</span>
<span class="t" style="left:508.41px;top:8.8px;font-size:13.2px;line-height:13.2px;color:#444;letter-spacing:0.009px;">Slide Show</span>
<span class="t" style="left:600.94px;top:8.8px;font-size:13.2px;line-height:13.2px;color:#444;letter-spacing:-0.342px;">Review</span>
<span class="t" style="left:670.00px;top:8.8px;font-size:13.2px;line-height:13.2px;color:#444;letter-spacing:-0.367px;">View</span>
<span class="t" style="left:726.00px;top:8.8px;font-size:13.2px;line-height:13.2px;color:#444;letter-spacing:0.209px;">Add-ins</span>
<span class="t" style="left:798.94px;top:8.8px;font-size:13.2px;line-height:13.2px;color:#444;letter-spacing:0.327px;">Help</span>
<span class="t" style="left:67.94px;top:8.8px;font-size:13.2px;line-height:13.2px;color:#3a3a3a;letter-spacing:1.310px;-webkit-text-stroke:0.45px #3a3a3a">Home</span>

<div class="abs" style="left:69px;top:25px;width:37px;height:3px;background:#b7472a"></div>
<div class="abs" style="left:874.5px;top:3.5px;width:67px;height:23px;background:#fff;border:1px solid #e1dfdd;border-radius:2px"></div>
<svg style="left:882px;top:9px" width="12" height="12.5" viewBox="0 0 14 13" fill="none" stroke="#b7472a" stroke-width="1.1"><path d="M5,3.5 H0.6 V12.4 H10.5 V9"/><path d="M4,9 C4.5,6 6.5,4.2 9.5,4 H13"/><path d="M10.2,1 L13.2,4 L10.2,7"/></svg>
<span class="t" style="left:897.92px;top:9.0px;font-size:12.8px;line-height:12.8px;color:#b7472a;letter-spacing:0.119px;-webkit-text-stroke:0.45px #b7472a">Share</span>
<div class="abs" style="left:950.5px;top:3.5px;width:31px;height:23px;background:#fff;border:1px solid #e1dfdd;border-radius:2px"></div>
<svg style="left:960px;top:10px" width="12" height="10.5" viewBox="0 0 13 12" fill="none" stroke="#b7472a" stroke-width="1.1"><path d="M0.6,0.6 H12.4 V8.2 H5.5 L2.8,11 V8.2 H0.6 Z"/></svg>
</div>
<div id="ribbon">
<!-- group separators -->
<div class="vs" style="left:96px;top:4px;height:88px"></div>
<div class="vs" style="left:190px;top:4px;height:88px"></div>
<div class="vs" style="left:400px;top:4px;height:88px"></div>
<div class="vs" style="left:594px;top:4px;height:88px"></div>
<div class="vs" style="left:783px;top:4px;height:88px"></div>
<div class="vs" style="left:837px;top:4px;height:88px"></div>
<div class="vs" style="left:895px;top:4px;height:88px"></div>
<div class="vs" style="left:953px;top:4px;height:88px"></div>
<!-- group labels -->
<span class="t" style="left:14.92px;top:82.2px;font-size:11.6px;line-height:11.6px;color:#444;letter-spacing:0.145px;">Clipboard</span>
<span class="t" style="left:127.48px;top:82.2px;font-size:11.6px;line-height:11.6px;color:#444;letter-spacing:-0.233px;">Slides</span>
<span class="t" style="left:274.57px;top:82.2px;font-size:11.6px;line-height:11.6px;color:#444;letter-spacing:0.412px;">Font</span>
<span class="t" style="left:462.57px;top:82.2px;font-size:11.6px;line-height:11.6px;color:#444;letter-spacing:-0.004px;">Paragraph</span>
<span class="t" style="left:659.07px;top:82.2px;font-size:11.6px;line-height:11.6px;color:#444;letter-spacing:0.271px;">Drawing</span>
<span class="t" style="left:853.50px;top:82.2px;font-size:11.6px;line-height:11.6px;color:#444;letter-spacing:-0.509px;">Voice</span>
<span class="t" style="left:900.57px;top:82.2px;font-size:11.6px;line-height:11.6px;color:#444;letter-spacing:0.023px;">Designer</span>
<!-- dialog launchers -->
<svg style="left:85px;top:84px" width="8" height="8" viewBox="0 0 8 8" stroke="#666" fill="none"><path d="M0.5,6.5 V0.5 H6.5 M3,3 L7.3,7.3 M7.5,3.8 V7.5 H3.8"/></svg>
<svg style="left:389px;top:84px" width="8" height="8" viewBox="0 0 8 8" fill="none" stroke="#a6a4a2"><path d="M0.5,6.5 V0.5 H6.5 M3,3 L7.3,7.3 M7.5,3.8 V7.5 H3.8"/></svg>
<svg style="left:583px;top:84px" width="8" height="8" viewBox="0 0 8 8" fill="none" stroke="#a6a4a2"><path d="M0.5,6.5 V0.5 H6.5 M3,3 L7.3,7.3 M7.5,3.8 V7.5 H3.8"/></svg>
<svg style="left:772px;top:84px" width="8" height="8" viewBox="0 0 8 8" fill="none" stroke="#a6a4a2"><path d="M0.5,6.5 V0.5 H6.5 M3,3 L7.3,7.3 M7.5,3.8 V7.5 H3.8"/></svg>
<!-- collapse -->
<svg style="left:976px;top:86px" width="10" height="7" viewBox="0 0 10 7" stroke-width="1.2" fill="none" stroke="#444"><path d="M0.6,6 L5,1.2 L9.4,6"/></svg>

<!-- ===== Clipboard ===== -->
<svg style="left:19px;top:8px" width="28" height="31" viewBox="0 0 28 31"><path d="M0.5,4.5 H7 C7.5,2 9,0.6 11,0.6 C13,0.6 14.5,2 15,4.5 H21.5 V27.5 H0.5 Z" fill="#e4e2e0" stroke="#b9b7b5"/><path d="M5,4.5 V7.5 H17 V4.5" fill="none" stroke="#b9b7b5"/><rect x="13.5" y="12.5" width="13" height="17" fill="#ebe9e7" stroke="#b9b7b5"/></svg>
<span class="t" style="left:15.52px;top:42.7px;font-size:12.2px;line-height:12.2px;color:#a6a4a2;letter-spacing:-0.420px;">Paste</span>
<svg style="left:25.5px;top:62.5px" width="7" height="4" viewBox="0 0 7 4" stroke-width="1.2" fill="none" stroke="#a6a4a2"><path d="M0.5,0.5 L3.5,3.3 L6.5,0.5"/></svg>
<!-- cut -->
<svg style="left:56px;top:7px" width="12" height="17" viewBox="0 0 12 17" fill="none"><path d="M3.2,0.5 L8.3,11.2 M8.8,0.5 L3.7,11.2" stroke="#444" stroke-width="1"/><circle cx="2.9" cy="14" r="1.8" stroke="#1e8ad6" stroke-width="1.2"/><circle cx="9.1" cy="14" r="1.8" stroke="#1e8ad6" stroke-width="1.2"/></svg>
<!-- copy -->
<svg style="left:54px;top:31px" width="17" height="17" viewBox="0 0 17 17" fill="#fff" stroke="#444"><path d="M0.5,0.5 H7.5 V13.5 H0.5 Z"/><path d="M6.5,3.5 H12 L15.5,7 V16.5 H6.5 Z"/><path d="M12,3.5 V7 H15.5" fill="none"/><path d="M9,10.5 H13.5 M9,13 H13.5" fill="none"/></svg>
<svg style="left:76px;top:37px" width="7" height="4" viewBox="0 0 7 4" stroke-width="1.45" fill="none" stroke="#444"><path d="M0.5,0.5 L3.5,3.3 L6.5,0.5"/></svg>
<!-- format painter -->
<svg style="left:54px;top:55px" width="17" height="16" viewBox="0 0 17 16"><path d="M10.5,4.5 L13.8,1.2 C14.6,0.4 15.9,1.7 15.1,2.5 L11.8,5.8" fill="#fff" stroke="#444"/><path d="M7.2,3.8 L12.4,9 L10.6,10.8 L5.4,5.6 Z" fill="#fff" stroke="#444"/><path d="M5.2,6 L10.2,11 L6.5,15.3 C4,14.6 2,13 0.7,10.6 Z" fill="#fbe3cc" stroke="#e07b1d"/><path d="M3,10.2 L7.5,13.6" stroke="#e07b1d" fill="none"/></svg>

<!-- ===== Slides ===== -->
<svg style="left:110px;top:6px" width="31" height="29" viewBox="0 0 31 29" fill="none"><rect x="3.5" y="5.5" width="26" height="21" stroke="#444"/><rect x="5.5" y="7.5" width="22" height="17" stroke="#555"/><path d="M5.5,14.5 H27.5 M16.5,14.5 V24.5" stroke="#555"/><rect x="0" y="0" width="14" height="14" fill="#f3f2f1" stroke="none"/><path d="M7.2,0.5 V14 M0.5,7.2 H14.5" stroke="#21a366" stroke-width="1.5"/></svg>
<span class="t" style="left:113.51px;top:42.5px;font-size:12.4px;line-height:12.4px;color:#444;letter-spacing:-0.180px;">New</span>
<span class="t" style="left:107.44px;top:58.5px;font-size:12.4px;line-height:12.4px;color:#444;letter-spacing:-0.506px;">Slide</span>
<svg style="left:135.5px;top:62.5px" width="7" height="4" viewBox="0 0 7 4" stroke-width="1.45" fill="none" stroke="#444"><path d="M0.5,0.5 L3.5,3.3 L6.5,0.5"/></svg>
<!-- layout -->
<svg style="left:150px;top:8px" width="17" height="14" viewBox="0 0 17 14" fill="none" stroke="#444"><rect x="0.5" y="0.5" width="16" height="13"/><rect x="2.5" y="2.5" width="12" height="9" stroke="#555"/><path d="M2.5,5.5 H14.5 M8.5,5.5 V11.5" stroke="#555"/></svg>
<svg style="left:170px;top:13px" width="7" height="4" viewBox="0 0 7 4" stroke-width="1.45" fill="none" stroke="#444"><path d="M0.5,0.5 L3.5,3.3 L6.5,0.5"/></svg>
<!-- reset -->
<svg style="left:149px;top:30px" width="18" height="16" viewBox="0 0 18 16" fill="none"><path d="M8,2.5 H17.5 V15.5 H1.5 V10" stroke="#444"/><path d="M11,5.5 H15.5 V12.5 H3.5 V10" stroke="#555"/><path d="M4.5,0.8 L1,4 L4.5,7.2" stroke="#2b7cd3" stroke-width="1.2"/><path d="M1.2,4 H6 C8.5,4 9.5,6 9.5,8.5" stroke="#2b7cd3" stroke-width="1.2"/></svg>
<!-- section -->
<svg style="left:150px;top:54px" width="17" height="17" viewBox="0 0 17 17" fill="none"><path d="M1,1.2 H16" stroke="#21a366" stroke-width="1.6"/><rect x="0.5" y="4.5" width="16" height="12" stroke="#444"/><rect x="2.5" y="6.5" width="12" height="8" stroke="#555"/></svg>
<svg style="left:170px;top:61px" width="7" height="4" viewBox="0 0 7 4" stroke-width="1.45" fill="none" stroke="#444"><path d="M0.5,0.5 L3.5,3.3 L6.5,0.5"/></svg>

<!-- ===== Font ===== -->
<div class="abs" style="left:199px;top:4px;width:148px;height:23px;background:#e1dfdd;border:1px solid #c8c6c4"></div>
<div class="abs" style="left:346px;top:4px;width:47px;height:23px;background:#e1dfdd;border:1px solid #c8c6c4"></div>
<svg style="left:336px;top:14px" width="7" height="4" viewBox="0 0 7 4" fill="none" stroke="#a6a4a2"><path d="M0.5,0.5 L3.5,3.3 L6.5,0.5"/></svg>
<svg style="left:382px;top:14px" width="7" height="4" viewBox="0 0 7 4" fill="none" stroke="#a6a4a2"><path d="M0.5,0.5 L3.5,3.3 L6.5,0.5"/></svg>
<span class="t" style="left:205.17px;top:32.2px;font-size:12.8px;line-height:12.8px;color:#a6a4a2;font-weight:bold;letter-spacing:0.000px;">B</span>
<span class="t" style="left:228.5px;top:31px;font-size:14.5px;line-height:14.5px;color:#a6a4a2;font-style:italic;font-family:'Liberation Serif',serif">I</span>
<span class="t" style="left:248.03px;top:31.5px;font-size:13px;line-height:13px;color:#a6a4a2;letter-spacing:0.000px;">U</span>
<div class="abs" style="left:249px;top:44.5px;width:9px;height:1px;background:#a6a4a2"></div>
<span class="t" style="left:270.66px;top:31.5px;font-size:13.6px;line-height:13.6px;color:#a6a4a2;font-weight:bold;letter-spacing:0.000px;">S</span>
<span class="t" style="left:291.50px;top:32.5px;font-size:12.4px;line-height:12.4px;color:#a6a4a2;letter-spacing:-0.776px;">ab</span>
<div class="abs" style="left:290px;top:39px;width:16px;height:1px;background:#a6a4a2"></div>
<span class="t" style="left:312.00px;top:29.3px;font-size:11.5px;line-height:11.5px;color:#a6a4a2;letter-spacing:0.654px;">AV</span>
<svg style="left:312px;top:40.5px" width="16" height="6" viewBox="0 0 16 6" fill="none" stroke="#a6a4a2"><path d="M0.8,3 H15.2 M3,0.8 L0.8,3 L3,5.2 M13,0.8 L15.2,3 L13,5.2"/></svg>
<svg style="left:332px;top:38px" width="7" height="4" viewBox="0 0 7 4" fill="none" stroke="#a6a4a2"><path d="M0.5,0.5 L3.5,3.3 L6.5,0.5"/></svg>
<!-- highlight -->
<svg style="left:202px;top:54px" width="17" height="17" viewBox="0 0 17 17"><path d="M4,9.5 L10.5,2 C11.5,1 13.5,2.5 12.8,3.8 L7.5,12 Z" fill="none" stroke="#a6a4a2"/><path d="M4,9.5 L2,12.2 L5,12.2 L7.5,12 Z" fill="#a6a4a2"/><rect x="0" y="13.5" width="16" height="3.5" fill="#b4b2b0"/></svg>
<svg style="left:224px;top:62px" width="7" height="4" viewBox="0 0 7 4" fill="none" stroke="#a6a4a2"><path d="M0.5,0.5 L3.5,3.3 L6.5,0.5"/></svg>
<span class="t" style="left:241.50px;top:53.8px;font-size:14.8px;line-height:14.8px;color:#a6a4a2;letter-spacing:0.000px;">A</span>
<div class="abs" style="left:239px;top:67.5px;width:16px;height:3.5px;background:#b4b2b0"></div>
<svg style="left:261px;top:62px" width="7" height="4" viewBox="0 0 7 4" fill="none" stroke="#a6a4a2"><path d="M0.5,0.5 L3.5,3.3 L6.5,0.5"/></svg>
<span class="t" style="left:277.00px;top:56.8px;font-size:13.2px;line-height:13.2px;color:#a6a4a2;letter-spacing:-0.664px;">Aa</span>
<svg style="left:296px;top:62px" width="7" height="4" viewBox="0 0 7 4" fill="none" stroke="#a6a4a2"><path d="M0.5,0.5 L3.5,3.3 L6.5,0.5"/></svg>
<div class="vs" style="left:313px;top:54px;height:20px"></div>
<span class="t" style="left:322.00px;top:53.6px;font-size:17px;line-height:17px;color:#a6a4a2;letter-spacing:0.000px;">A</span>
<svg style="left:333.5px;top:56px" width="5" height="3" viewBox="0 0 5 3" fill="none" stroke="#a6a4a2"><path d="M0.4,2.6 L2.5,0.6 L4.6,2.6"/></svg>
<span class="t" style="left:346.00px;top:56.7px;font-size:13.3px;line-height:13.3px;color:#a6a4a2;letter-spacing:0.000px;">A</span>
<svg style="left:355px;top:58px" width="5" height="3" viewBox="0 0 5 3" fill="none" stroke="#a6a4a2"><path d="M0.4,0.4 L2.5,2.4 L4.6,0.4"/></svg>
<div class="vs" style="left:366px;top:54px;height:20px"></div>
<span class="t" style="left:374.00px;top:53.6px;font-size:17px;line-height:17px;color:#a6a4a2;letter-spacing:0.000px;">A</span>
<svg style="left:381px;top:61.5px" width="10" height="9" viewBox="0 0 10 9" ><path d="M0.6,5 L5.5,0.6 L9.2,4.2 L4.3,8.4 Z" fill="#f3f2f1" stroke="#a6a4a2"/></svg>
<!-- ===== Paragraph ===== -->
<!-- bullets -->
<svg style="left:412px;top:8px" width="16" height="15" viewBox="0 0 16 15"><rect x="0" y="1" width="3" height="3" fill="#a6a4a2"/><rect x="0" y="6" width="3" height="3" fill="#a6a4a2"/><rect x="0" y="11" width="3" height="3" fill="#a6a4a2"/><path d="M5.5,2.5 H15.5 M5.5,7.5 H15.5 M5.5,12.5 H15.5" fill="none" stroke="#a6a4a2"/></svg>
<svg style="left:433.5px;top:13px" width="7" height="4" viewBox="0 0 7 4" stroke-width="1.2" fill="none" stroke="#a6a4a2"><path d="M0.5,0.5 L3.5,3.3 L6.5,0.5"/></svg>
<svg style="left:448px;top:7px" width="17" height="17" viewBox="0 0 17 17"><path d="M6.5,3.5 H16.5 M6.5,8.5 H16.5 M6.5,13.5 H16.5" fill="none" stroke="#a6a4a2"/><text x="0.5" y="5" font-size="5.5" fill="#a6a4a2" font-family="Liberation Sans">1</text><text x="0.5" y="10.5" font-size="5.5" fill="#a6a4a2" font-family="Liberation Sans">2</text><text x="0.5" y="16.3" font-size="5.5" fill="#a6a4a2" font-family="Liberation Sans">3</text></svg>
<svg style="left:470.5px;top:13px" width="7" height="4" viewBox="0 0 7 4" stroke-width="1.2" fill="none" stroke="#a6a4a2"><path d="M0.5,0.5 L3.5,3.3 L6.5,0.5"/></svg>
<div class="vs" style="left:487px;top:5px;height:21px"></div>
<!-- line spacing -->
<svg style="left:494px;top:8px" width="18" height="15" viewBox="0 0 18 15" fill="none" stroke="#a6a4a2"><path d="M3.5,0.8 V14.2 M1,3.2 L3.5,0.8 L6,3.2 M1,11.8 L3.5,14.2 L6,11.8"/><path d="M8,1.5 H17.5 M8,5.5 H17.5 M8,9.5 H17.5 M8,13.5 H17.5"/></svg>
<svg style="left:514.5px;top:13px" width="7" height="4" viewBox="0 0 7 4" stroke-width="1.2" fill="none" stroke="#a6a4a2"><path d="M0.5,0.5 L3.5,3.3 L6.5,0.5"/></svg>
<!-- text direction -->
<svg style="left:555px;top:7px" width="15" height="17" viewBox="0 0 15 17" fill="none" stroke="#a6a4a2"><path d="M3.5,0.5 V15.5 M1,13 L3.5,15.5 L6,13"/><path d="M10.5,9 V15.5 M8,13 L10.5,15.5 L13,13"/><path d="M7.2,7.5 L10.4,0.8 L13.6,7.5 M8.3,5.2 H12.5" stroke-width="0.9"/></svg>
<svg style="left:573.5px;top:13px" width="7" height="4" viewBox="0 0 7 4" stroke-width="1.2" fill="none" stroke="#a6a4a2"><path d="M0.5,0.5 L3.5,3.3 L6.5,0.5"/></svg>
<!-- indent -->
<svg style="left:412px;top:32px" width="16" height="15" viewBox="0 0 16 15" fill="none" stroke="#a6a4a2"><path d="M0.5,1.5 H15.5 M8.5,5.5 H15.5 M8.5,9.5 H15.5 M0.5,13.5 H15.5"/><path d="M0.8,7.5 H6.5 M3,5.2 L0.8,7.5 L3,9.8"/></svg>
<svg style="left:434px;top:32px" width="16" height="15" viewBox="0 0 16 15" fill="none" stroke="#a6a4a2"><path d="M0.5,1.5 H15.5 M8.5,5.5 H15.5 M8.5,9.5 H15.5 M0.5,13.5 H15.5"/><path d="M0.5,7.5 H6.2 M4,5.2 L6.2,7.5 L4,9.8"/></svg>
<div class="vs" style="left:457px;top:29px;height:21px"></div>
<svg style="left:466px;top:35px" width="14" height="10" viewBox="0 0 14 10"><path d="M0.6,1.5 L3.6,4.5 L0.6,7.5" fill="none" stroke="#a6a4a2"/><path d="M9.5,9.5 V0.8 M12,9.5 V0.8 M8,0.8 H13.5" fill="none" stroke="#a6a4a2"/><path d="M9.5,0.8 C5.5,0.8 5.5,5.5 9.5,5.5 Z" fill="#a6a4a2"/></svg>
<svg style="left:488px;top:35px" width="14" height="10" viewBox="0 0 14 10"><path d="M13.4,1.5 L10.4,4.5 L13.4,7.5" fill="none" stroke="#a6a4a2"/><path d="M4.5,9.5 V0.8 M7,9.5 V0.8 M3,0.8 H8.5" fill="none" stroke="#a6a4a2"/><path d="M4.5,0.8 C0.5,0.8 0.5,5.5 4.5,5.5 Z" fill="#a6a4a2"/></svg>
<div class="vs" style="left:510px;top:29px;height:21px"></div>
<svg style="left:519px;top:35px" width="15" height="9" viewBox="0 0 15 9" fill="none" stroke="#a6a4a2"><path d="M0.5,0.5 H6 M0.5,4.5 H6 M0.5,8.5 H6 M8.5,0.5 H14 M8.5,4.5 H14 M8.5,8.5 H14"/></svg>
<svg style="left:537.5px;top:37px" width="7" height="4" viewBox="0 0 7 4" stroke-width="1.2" fill="none" stroke="#a6a4a2"><path d="M0.5,0.5 L3.5,3.3 L6.5,0.5"/></svg>
<svg style="left:553px;top:31px" width="18" height="16" viewBox="0 0 18 16" fill="none" stroke="#a6a4a2"><path d="M4,2.5 H0.5 V13.5 H4 M14,2.5 H17.5 V13.5 H14"/><path d="M9,0.6 V6 M6.8,2.8 L9,0.6 L11.2,2.8 M9,15.4 V10 M6.8,13.2 L9,15.4 L11.2,13.2 M5,8 H13"/></svg>
<svg style="left:573.5px;top:37px" width="7" height="4" viewBox="0 0 7 4" stroke-width="1.2" fill="none" stroke="#a6a4a2"><path d="M0.5,0.5 L3.5,3.3 L6.5,0.5"/></svg>
<!-- align -->
<svg style="left:412px;top:56px" width="16" height="14" viewBox="0 0 16 14" fill="none" stroke="#a6a4a2"><path d="M0.5,0.5 H15.5 M0.5,4.5 H10.5 M0.5,8.5 H15.5 M0.5,12.5 H10.5"/></svg>
<svg style="left:434px;top:56px" width="16" height="14" viewBox="0 0 16 14" fill="none" stroke="#a6a4a2"><path d="M0.5,0.5 H15.5 M3,4.5 H13 M0.5,8.5 H15.5 M3,12.5 H13"/></svg>
<svg style="left:456px;top:56px" width="16" height="14" viewBox="0 0 16 14" fill="none" stroke="#a6a4a2"><path d="M0.5,0.5 H15.5 M5.5,4.5 H15.5 M0.5,8.5 H15.5 M5.5,12.5 H15.5"/></svg>
<svg style="left:478px;top:56px" width="16" height="14" viewBox="0 0 16 14" fill="none" stroke="#a6a4a2"><path d="M0.5,0.5 H15.5 M0.5,4.5 H15.5 M0.5,8.5 H15.5 M0.5,12.5 H15.5"/></svg>
<svg style="left:497.5px;top:61px" width="7" height="4" viewBox="0 0 7 4" stroke-width="1.2" fill="none" stroke="#a6a4a2"><path d="M0.5,0.5 L3.5,3.3 L6.5,0.5"/></svg>
<!-- smartart -->
<svg style="left:553px;top:55px" width="18" height="16" viewBox="0 0 18 16"><path d="M0.6,0.8 H11.5 L14.5,4 L12.5,6 H5.5 V8.5 H0.6 L4,4.5 Z" fill="#c8c6c4" stroke="#a6a4a2"/><rect x="6.5" y="6.5" width="10" height="9" fill="#f3f2f1" stroke="#a6a4a2"/><path d="M8.5,9.5 H9.5 M11,9.5 H15 M8.5,12.5 H9.5 M11,12.5 H15" fill="none" stroke="#a6a4a2"/></svg>
<svg style="left:573.5px;top:61px" width="7" height="4" viewBox="0 0 7 4" stroke-width="1.2" fill="none" stroke="#a6a4a2"><path d="M0.5,0.5 L3.5,3.3 L6.5,0.5"/></svg>
<!-- ===== Drawing ===== -->
<svg style="left:609px;top:7px" width="31" height="32" viewBox="0 0 31 32"><rect x="1" y="1" width="18.5" height="18.5" fill="#83beec" stroke="#2b7cd3" stroke-width="1.3"/><circle cx="19" cy="19.5" r="9.7" fill="#fafafa" stroke="#444" stroke-width="1.2"/></svg>
<span class="t" style="left:604.44px;top:42.5px;font-size:12.4px;line-height:12.4px;color:#444;letter-spacing:-0.804px;">Shapes</span>
<svg style="left:619.5px;top:62.5px" width="7" height="4" viewBox="0 0 7 4" stroke-width="1.45" fill="none" stroke="#444"><path d="M0.5,0.5 L3.5,3.3 L6.5,0.5"/></svg>
<svg style="left:654px;top:8px" width="30" height="30" viewBox="0 0 30 30"><rect x="4.6" y="4.2" width="19" height="19.4" fill="#f8d88a" stroke="#e8830c" stroke-width="1.2"/><rect x="0.6" y="0.6" width="11" height="11" fill="#fafafa" stroke="#444" stroke-width="1.1"/><rect x="16.6" y="16.4" width="11" height="11" fill="#fafafa" stroke="#444" stroke-width="1.1"/></svg>
<span class="t" style="left:647.00px;top:42.5px;font-size:12.4px;line-height:12.4px;color:#444;letter-spacing:-0.260px;">Arrange</span>
<svg style="left:663.5px;top:62.5px" width="7" height="4" viewBox="0 0 7 4" stroke-width="1.45" fill="none" stroke="#444"><path d="M0.5,0.5 L3.5,3.3 L6.5,0.5"/></svg>
<svg style="left:701px;top:8px" width="31" height="31" viewBox="0 0 31 31"><rect x="0.6" y="0.6" width="27" height="26.5" rx="1.5" fill="#edebe9" stroke="#a9a7a5" stroke-width="1.1"/><path d="M8,27.8 H20" stroke="#f3f2f1" stroke-width="2.2"/><path d="M28.2,10.2 C29.2,9.2 30.6,10.4 29.8,11.6 L19.2,25.2 L16.6,23.2 Z" fill="#c9c7c5" stroke="#a9a7a5" stroke-width="0.9"/><path d="M16.4,23 L19.4,25.4 C18.5,28.5 14.5,30 8.2,29.2 C11,28 12.2,26.5 13,24.6 C14,22.6 15.4,22.2 16.4,23 Z" fill="#bdbbb9" stroke="#a9a7a5" stroke-width="0.7"/></svg>
<span class="t" style="left:698.94px;top:42.5px;font-size:12.4px;line-height:12.4px;color:#a6a4a2;letter-spacing:-0.169px;">Quick</span>
<span class="t" style="left:693.44px;top:58.5px;font-size:12.4px;line-height:12.4px;color:#a6a4a2;letter-spacing:-0.456px;">Styles</span>
<svg style="left:728.0px;top:62.5px" width="7" height="4" viewBox="0 0 7 4" stroke-width="1.2" fill="none" stroke="#a6a4a2"><path d="M0.5,0.5 L3.5,3.3 L6.5,0.5"/></svg>
<!-- fill -->
<svg style="left:741px;top:5.5px" width="17" height="17" viewBox="0 0 17 17"><path d="M3.5,6.5 L8,1.5 L13,6.5 L8.5,11 Z" fill="#f7f6f5" stroke="#a6a4a2"/><path d="M7,3 V0.6 M13,6.5 C14.5,8 14.8,9.5 13.8,10.2" fill="none" stroke="#a6a4a2"/><rect x="0" y="12.4" width="16" height="3.5" fill="#b4b2b0"/></svg>
<svg style="left:762.5px;top:12px" width="7" height="4" viewBox="0 0 7 4" stroke-width="1.2" fill="none" stroke="#a6a4a2"><path d="M0.5,0.5 L3.5,3.3 L6.5,0.5"/></svg>
<svg style="left:741px;top:28px" width="17" height="17" viewBox="0 0 17 17"><path d="M9.5,2.5 H1.5 V11.5 H3.5" fill="none" stroke="#a6a4a2"/><path d="M5,11.5 L6,8 L12.5,1.2 C13.5,0.3 15.5,2 14.5,3.2 L8.2,10.2 Z" fill="#f3f2f1" stroke="#a6a4a2"/><rect x="0" y="13.5" width="16" height="3.5" fill="#b4b2b0"/></svg>
<svg style="left:762.5px;top:35px" width="7" height="4" viewBox="0 0 7 4" stroke-width="1.2" fill="none" stroke="#a6a4a2"><path d="M0.5,0.5 L3.5,3.3 L6.5,0.5"/></svg>
<svg style="left:741px;top:53px" width="17" height="14" viewBox="0 0 17 14"><path d="M0.6,8 L4.5,0.8 H15.5 L12,8 Z" fill="#edebe9" stroke="#a6a4a2"/><path d="M0.6,8 V11.5 L1.5,12.8 H11.5 L12,8 M12,8 L11.5,12.8 L15.5,4.8 V0.8" fill="#c8c6c4" stroke="#a6a4a2"/></svg>
<svg style="left:762.5px;top:58px" width="7" height="4" viewBox="0 0 7 4" stroke-width="1.2" fill="none" stroke="#a6a4a2"><path d="M0.5,0.5 L3.5,3.3 L6.5,0.5"/></svg>
<!-- ===== Editing ===== -->
<div class="abs" style="left:795px;top:4px;width:32px;height:31px;background:#fff;border:1px solid #e1dfdd"></div>
<svg style="left:803px;top:11px" width="17" height="17" viewBox="0 0 17 17" stroke-width="1.2" fill="none" stroke="#444"><circle cx="10.5" cy="6" r="5"/><path d="M6.9,9.8 L0.8,16.2"/></svg>
<span class="t" style="left:791.51px;top:40.5px;font-size:12.4px;line-height:12.4px;color:#444;letter-spacing:0.063px;">Editing</span>
<svg style="left:806.5px;top:60.5px" width="7" height="4" viewBox="0 0 7 4" stroke-width="1.45" fill="none" stroke="#444"><path d="M0.5,0.5 L3.5,3.3 L6.5,0.5"/></svg>
<!-- ===== Voice ===== -->
<svg style="left:856px;top:7px" width="21" height="31" viewBox="0 0 21 31"><rect x="4.2" y="0.8" width="12.6" height="20.5" rx="2.8" fill="#83beec" stroke="#2b7cd3" stroke-width="1.3"/><path d="M0.8,14 V19 C0.8,22.8 4.5,25.3 10.5,25.3 C16.5,25.3 20.2,22.8 20.2,19 V14" fill="none" stroke="#444" stroke-width="1.1"/><path d="M10.5,25.3 V29.5 M6,29.8 H15" fill="none" stroke="#444" stroke-width="1.1"/></svg>
<span class="t" style="left:847.51px;top:42.5px;font-size:12.4px;line-height:12.4px;color:#444;letter-spacing:-0.094px;">Dictate</span>
<svg style="left:862.5px;top:62.5px" width="7" height="4" viewBox="0 0 7 4" stroke-width="1.45" fill="none" stroke="#444"><path d="M0.5,0.5 L3.5,3.3 L6.5,0.5"/></svg>
<!-- ===== Designer ===== -->
<svg style="left:908px;top:5px" width="32" height="30" viewBox="0 0 32 30"><rect x="4.5" y="6.5" width="26" height="21" fill="#fafafa" stroke="#444"/><rect x="6.5" y="8.5" width="22" height="17" fill="none" stroke="#555"/><path d="M6.5,13.5 H28.5 M21.5,13.5 V25.5" stroke="#555" fill="none"/><path d="M7,0.6 H13.2 L10.2,7.5 H13.8 L3.2,19.5 L6.2,10.8 H1.2 Z" fill="#f8c878" stroke="#e8912d" stroke-width="1.1" stroke-linejoin="round"/></svg>
<span class="t" style="left:906.51px;top:42.5px;font-size:12.4px;line-height:12.4px;color:#444;letter-spacing:-0.261px;">Design</span>
<span class="t" style="left:910.38px;top:58.5px;font-size:12.4px;line-height:12.4px;color:#444;letter-spacing:-0.562px;">Ideas</span>

</div>

<div id="status">
<span class="t" style="left:8.99px;top:5.2px;font-size:11.3px;line-height:11.3px;color:#444;letter-spacing:0.040px;">Slide 4 of 14</span>
<span class="t" style="left:103.60px;top:5.2px;font-size:11.3px;line-height:11.3px;color:#444;letter-spacing:0.068px;">English (United States)</span>
<svg style="left:236px;top:3px" width="16" height="16" viewBox="0 0 16 16" stroke-width="1.1" fill="none" stroke="#444"><path d="M7,1 V6.5 H10.2"/><path d="M4.6,1.9 C2.5,2.9 1,5 1,7.5 C1,10 2.4,12.2 4.6,13.2" stroke-dasharray="2.6 1.6"/><path d="M6.5,13.8 C8,14 9,13.8 9.8,13.3" /><path d="M11.2,1.5 V5.5 M9.2,3.5 H13.2" stroke-width="1"/><path d="M10.2,9.2 L15.2,14.6 M15.2,9.2 L10.2,14.6" stroke-width="1.2"/></svg>
<span class="t" style="left:254.50px;top:5.2px;font-size:11.3px;line-height:11.3px;color:#444;letter-spacing:0.022px;">Accessibility: Investigate</span>
<svg style="left:558px;top:2px" width="16" height="16" viewBox="0 0 16 16" stroke-width="1.1" fill="none" stroke="#444"><path d="M5,3.8 L8,1 L11,3.8 M0,7.5 H16 M0,11.5 H16 M0,15.5 H16"/></svg>
<span class="t" style="left:576.10px;top:5.2px;font-size:11.3px;line-height:11.3px;color:#444;letter-spacing:0.328px;">Notes</span>
<div class="abs" style="left:625px;top:0px;width:40px;height:21px;background:#c8c6c4"></div>
<svg style="left:638px;top:4px" width="15" height="12" viewBox="0 0 15 12" stroke="#333" fill="none"><rect x="0.5" y="0.5" width="14" height="11"/><path d="M3.5,0.5 V11.5 M3.5,8.5 H14.5"/><rect x="5.5" y="2.5" width="7" height="4" stroke-width="0.9"/></svg>
<svg style="left:678px;top:4px" width="14" height="12" viewBox="0 0 14 12" fill="none" stroke="#444"><rect x="0.5" y="0.5" width="5" height="4"/><rect x="8.5" y="0.5" width="5" height="4"/><rect x="0.5" y="7.5" width="5" height="4"/><rect x="8.5" y="7.5" width="5" height="4"/></svg>
<svg style="left:718px;top:3px" width="15" height="14" viewBox="0 0 15 14" fill="none" stroke="#444"><path d="M7.5,2 C5.5,0.6 3,0.5 0.5,1 V12 C3,11.5 5.5,11.6 7.5,13 C9.5,11.6 12,11.5 14.5,12 V1 C12,0.5 9.5,0.6 7.5,2 Z M7.5,2 V13"/><path d="M2.5,3.5 H5.5 M2.5,5.5 H5.5 M2.5,7.5 H5.5 M9.5,3.5 H12.5 M9.5,5.5 H12.5 M9.5,7.5 H12.5" stroke-width="0.8"/></svg>
<svg style="left:758px;top:3px" width="14" height="15" viewBox="0 0 14 15" fill="none" stroke="#444"><path d="M0.5,0.8 H13.5 M1.5,0.8 V7.5 H12.5 V0.8 M7,7.5 V13 M3.5,13.5 H10.5"/></svg>
<div class="abs" style="left:790px;top:10px;width:9px;height:1px;background:#444"></div>
<div class="abs" style="left:806px;top:10px;width:98px;height:1px;background:#a0a0a0"></div>
<div class="abs" style="left:855px;top:8px;width:1px;height:5px;background:#a0a0a0"></div>
<div class="abs" style="left:821px;top:5px;width:5px;height:11px;background:#6e6e6e"></div>
<div class="abs" style="left:908px;top:10px;width:9px;height:1px;background:#444"></div>
<div class="abs" style="left:912px;top:6px;width:1px;height:9px;background:#444"></div>
<span class="t" style="left:930.27px;top:5.2px;font-size:11.3px;line-height:11.3px;color:#444;letter-spacing:-0.243px;">41%</span>
<svg style="left:962px;top:2px" width="17" height="17" viewBox="0 0 17 17" stroke-width="1.1" fill="none" stroke="#444"><rect x="5" y="5" width="7" height="7"/><path d="M6.3,2.6 L8.5,0.6 L10.7,2.6 M6.3,14.4 L8.5,16.4 L10.7,14.4 M2.6,6.3 L0.6,8.5 L2.6,10.7 M14.4,6.3 L16.4,8.5 L14.4,10.7"/></svg>
</div>

<div id="borderL"></div><div id="borderR"></div><div id="borderB"></div>
</div>
</body>
</html>
